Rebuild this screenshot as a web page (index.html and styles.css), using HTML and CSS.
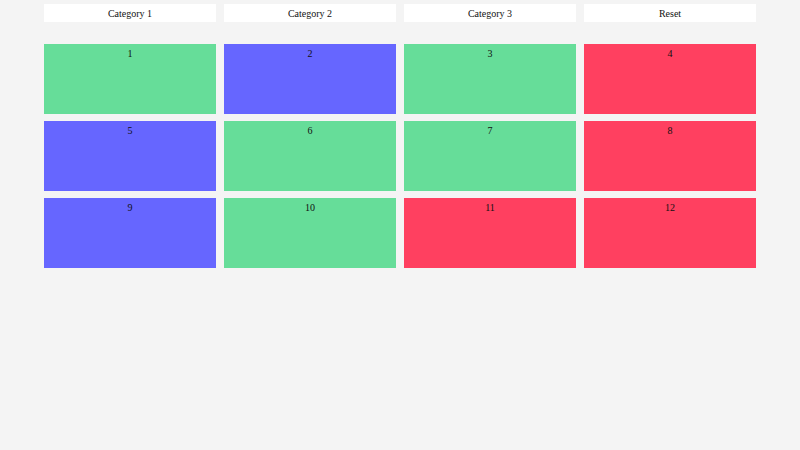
FILE: index.html
```html
<!DOCTYPE html>
<html>
<head>
<meta charset="utf-8">
<link rel="stylesheet" href="styles.css">
</head>
<body>
<div class="page">
  <div class="controls">
    <button class="btn">Category 1</button>
    <button class="btn">Category 2</button>
    <button class="btn">Category 3</button>
    <button class="btn">Reset</button>
  </div>
  <div class="grid">
    <div class="tile green">1</div>
    <div class="tile blue">2</div>
    <div class="tile green">3</div>
    <div class="tile red">4</div>
    <div class="tile blue">5</div>
    <div class="tile green">6</div>
    <div class="tile green">7</div>
    <div class="tile red">8</div>
    <div class="tile blue">9</div>
    <div class="tile green">10</div>
    <div class="tile red">11</div>
    <div class="tile red">12</div>
  </div>
</div>
</body>
</html>
```
FILE: styles.css
```css
html, body {
  margin: 0;
  padding: 0;
  background: #f4f4f4;
  font-family: "Liberation Serif", "Times New Roman", serif;
  font-size: 10px;
  color: #111;
}
.page {
  padding: 4px 44px;
}
.controls {
  display: grid;
  grid-template-columns: repeat(4, 1fr);
  column-gap: 8px;
}
.btn {
  height: 18px;
  border: none;
  background: #ffffff;
  font-family: inherit;
  font-size: 10px;
  color: #111;
  padding: 0;
  margin: 0;
}
.grid {
  margin-top: 22px;
  display: grid;
  grid-template-columns: repeat(4, 1fr);
  column-gap: 8px;
  row-gap: 7px;
}
.tile {
  height: 70px;
  text-align: center;
  padding-top: 4px;
  box-sizing: border-box;
  line-height: 12px;
  font-size: 10px;
}
.green { background: #66dd99; }
.blue { background: #6666ff; }
.red { background: #ff4060; }
```
